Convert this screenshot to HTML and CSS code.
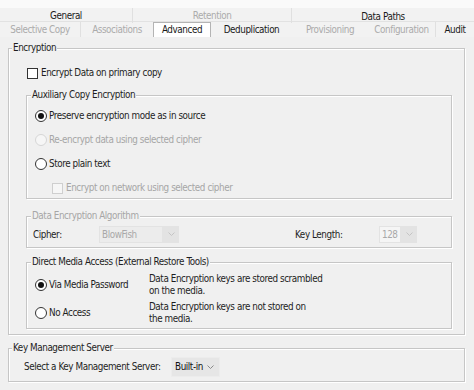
FILE: index.html
```html
<!DOCTYPE html>
<html>
<head>
<meta charset="utf-8">
<link rel="stylesheet" href="styles.css">
</head>
<body>
<div class="tabs">
  <div class="tab-row row1">
    <div class="tab sep">General</div>
    <div class="tab sep dis">Retention</div>
    <div class="tab">Data Paths</div>
  </div>
  <div class="tab-row row2">
    <div class="tab sep dis">Selective Copy</div>
    <div class="tab dis">Associations</div>
    <div class="tab active">Advanced</div>
    <div class="tab">Deduplication</div>
    <div class="tab dis">Provisioning</div>
    <div class="tab sep dis">Configuration</div>
    <div class="tab">Audit</div>
  </div>
</div>

<div class="main">
  <div class="group g-enc">
    <div class="group-title t-enc">Encryption</div>
    <div class="row row-primary">
      <span class="check"></span><span class="lbl">Encrypt Data on primary copy</span>
    </div>

    <div class="group g-aux">
      <div class="group-title t-inner">Auxiliary Copy Encryption</div>
      <div class="aux-body">
        <div class="row"><span class="radio on"></span><span class="lbl">Preserve encryption mode as in source</span></div>
        <div class="row dis"><span class="radio off-dis"></span><span class="lbl">Re-encrypt data using selected cipher</span></div>
        <div class="row"><span class="radio"></span><span class="lbl">Store plain text</span></div>
        <div class="row dis nested"><span class="check check-dis"></span><span class="lbl">Encrypt on network using selected cipher</span></div>
      </div>
    </div>

    <div class="group g-dea">
      <div class="group-title t-inner dis">Data Encryption Algorithm</div>
      <div class="dea-body">
        <span class="field-lbl cipher-lbl">Cipher:</span>
        <div class="select sel-dis sel-cipher"><span class="sel-val">BlowFish</span><span class="sel-arrow"><svg width="7" height="5" viewBox="0 0 7 5"><polyline points="0.5,0.5 3.5,3.5 6.5,0.5" fill="none" stroke="#c4c4c4" stroke-width="1"/></svg></span></div>
        <span class="field-lbl keylen-lbl">Key Length:</span>
        <div class="select sel-dis sel-key"><span class="sel-val">128</span><span class="sel-arrow"><svg width="7" height="5" viewBox="0 0 7 5"><polyline points="0.5,0.5 3.5,3.5 6.5,0.5" fill="none" stroke="#c4c4c4" stroke-width="1"/></svg></span></div>
      </div>
    </div>

    <div class="group g-dma">
      <div class="group-title t-inner">Direct Media Access (External Restore Tools)</div>
      <div class="dma-body">
        <div class="dma-row">
          <div class="dma-opt"><span class="radio on"></span><span class="lbl">Via Media Password</span></div>
          <div class="dma-desc">Data Encryption keys are stored scrambled<br>on the media.</div>
        </div>
        <div class="dma-row">
          <div class="dma-opt"><span class="radio"></span><span class="lbl">No Access</span></div>
          <div class="dma-desc">Data Encryption keys are not stored on<br>the media.</div>
        </div>
      </div>
    </div>
  </div>

  <div class="group g-kms">
    <div class="group-title t-kms">Key Management Server</div>
    <div class="kms-body">
      <span class="field-lbl kms-lbl">Select a Key Management Server:</span>
      <div class="select sel-kms"><span class="sel-val">Built-in</span><span class="sel-arrow"><svg width="7" height="5" viewBox="0 0 7 5"><polyline points="0.5,0.5 3.5,3.5 6.5,0.5" fill="none" stroke="#8a8a8a" stroke-width="1"/></svg></span></div>
    </div>
  </div>
</div>
</body>
</html>
```

FILE: styles.css
```css
* { box-sizing: border-box; }
html, body { margin: 0; padding: 0; }
body {
  width: 474px;
  height: 390px;
  overflow: hidden;
  background: #f0f0f0;
  font-family: "DejaVu Sans", Tahoma, sans-serif;
  font-stretch: condensed;
  font-size: 9.8px;
  letter-spacing: -0.42px;
  color: #1e1e1e;
  line-height: 12px;
}
.dis { color: #a6a6a6; }

/* tabs */
.tabs {
  background: #fafafa;
  padding-top: 8px;
}
.tab-row { display: grid; }
.row1 {
  grid-template-columns: 133px 159px 1fr;
  height: 14px;
  padding-top: 3px;
  background: #f2f2f2;
  border-bottom: 1px solid #e2e2e2;
}
.row2 {
  grid-template-columns: 81px 72px 58px 81px 76px 68px 1fr;
  height: 15px;
  background: #f2f2f2;
}
.tab {
  display: flex;
  align-items: center;
  justify-content: center;
  white-space: nowrap;
  color: #1a1a1a;
}
.tab.dis { color: #ababab; }
.tab.sep { border-right: 1px solid #e0e0e0; }
.row1 .tab.sep { margin-top: -3px; }
.tab.active {
  background: #ffffff;
  border: 1px solid #b4b4b4;
  border-bottom: none;
}

/* main */
.main {
  padding: 11px 9px 0 8px;
}
.group {
  border: 1px solid #c6c6c6;
  box-shadow: inset 1px 1px 0 #ffffff, 1px 1px 0 #ffffff;
}
.group-title {
  width: fit-content;
  background: #f0f0f0;
  padding: 0 1px;
  line-height: 12px;
  height: 12px;
  margin-top: -7px;
  white-space: nowrap;
}
.g-enc { padding: 0 12px 5px 17px; }
.t-enc { margin-left: -14px; }
.t-inner { margin-left: -4px; }
.t-kms { margin-left: -12px; }

.row {
  display: flex;
  align-items: center;
  height: 14px;
  white-space: nowrap;
}
.row-primary { margin-top: 12px; padding-left: 1px; }
.row-primary .lbl { margin-left: 3px; }

.lbl { margin-left: 2px; }

.check {
  display: inline-block;
  width: 11px;
  height: 11px;
  border: 1px solid #333333;
  background: #ffffff;
  flex: none;
}
.check-dis { border-color: #cfcfcf; background: #f6f6f6; }
.radio {
  position: relative;
  display: inline-block;
  width: 12px;
  height: 12px;
  border-radius: 50%;
  border: 1px solid #333333;
  background: #ffffff;
  flex: none;
}
.radio.on::after {
  content: "";
  position: absolute;
  left: 2px; top: 2px;
  width: 6px; height: 6px;
  border-radius: 50%;
  background: #111111;
}
.radio.off-dis { border-color: #d6d6d6; background: #f6f6f6; }

.g-aux { margin-top: 15px; padding: 0 0 3px 8px; }
.aux-body {
  padding-top: 8px;
  display: flex;
  flex-direction: column;
  gap: 10px;
}
.nested { padding-left: 17px; }
.nested .lbl { margin-left: 3px; }

.g-dea { margin-top: 17px; padding: 0 0 4px 6px; }
.g-dea .t-inner { margin-left: -2px; }
.dea-body {
  padding-top: 4px;
  display: flex;
  align-items: center;
  height: 21px;
}
.field-lbl { white-space: nowrap; flex: none; }
.cipher-lbl { width: 66px; }
.keylen-lbl { margin-left: 116px; width: 84px; }

.select {
  display: flex;
  align-items: center;
  height: 17px;
  white-space: nowrap;
  flex: none;
}
.sel-dis { background: #e3e3e3; color: #a8a8a8; }
.sel-dis .sel-val { background: #ececec; height: 15px; margin: 1px; display: flex; align-items: center; padding-left: 2px; }
.sel-cipher { width: 80px; }
.sel-cipher .sel-val { width: 62px; }
.sel-key { width: 38px; }
.sel-key .sel-val { width: 20px; background: #f5f5f5; }
.sel-arrow { flex: 1; display: flex; justify-content: center; align-items: center; }

.g-dma { margin-top: 14px; padding: 0 0 3px 8px; }
.dma-body {
  padding-top: 5px;
  display: flex;
  flex-direction: column;
  gap: 4px;
}
.dma-row { display: flex; align-items: center; height: 24px; }
.dma-opt { display: flex; align-items: center; width: 114px; white-space: nowrap; flex: none; }
.dma-desc { line-height: 12px; white-space: nowrap; }

.g-kms { margin-top: 13px; padding: 0 0 4px 15px; }
.kms-body {
  padding-top: 3px;
  display: flex;
  align-items: center;
  height: 23px;
}
.kms-lbl { width: 147px; }
.sel-kms {
  height: 20px;
  width: 49px;
  background: #e6e6e6;
  border: 1px solid #ececec;
  padding-left: 3px;
  color: #111;
}
```
